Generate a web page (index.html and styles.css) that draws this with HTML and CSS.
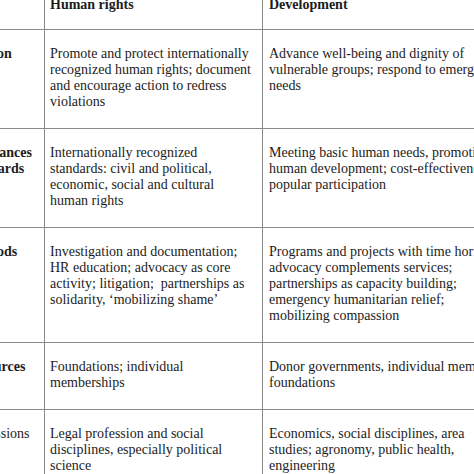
FILE: index.html
```html
<!DOCTYPE html>
<html lang="en">
<head>
<meta charset="utf-8">
<title>Human rights and development NGOs compared</title>
<link rel="stylesheet" href="styles.css">
</head>
<body>
<table class="compare">
  <colgroup>
    <col class="col-aspect">
    <col class="col-hr">
    <col class="col-dev">
  </colgroup>
  <thead>
    <tr>
      <th></th>
      <th>Human rights</th>
      <th>Development</th>
    </tr>
  </thead>
  <tbody>
    <tr>
      <th>Mission</th>
      <td>Promote and protect internationally recognized human rights; document and encourage action to redress violations</td>
      <td>Advance well-being and dignity of vulnerable groups; respond to emergency needs</td>
    </tr>
    <tr>
      <th>Grievances standards</th>
      <td>Internationally recognized standards: civil and political, economic, social and cultural human rights</td>
      <td>Meeting basic human needs, promoting human development; cost-effectiveness; popular participation</td>
    </tr>
    <tr>
      <th>Methods</th>
      <td>Investigation and documentation; HR education; advocacy as core activity; litigation;&nbsp; partnerships as solidarity, ‘mobilizing shame’</td>
      <td>Programs and projects with time horizons; advocacy complements services; partnerships as capacity building; emergency humanitarian relief; mobilizing compassion</td>
    </tr>
    <tr>
      <th>Resources</th>
      <td>Foundations; individual memberships</td>
      <td>Donor governments, individual members, foundations</td>
    </tr>
    <tr>
      <th class="plain">Professions</th>
      <td>Legal profession and social disciplines, especially political science</td>
      <td>Economics, social disciplines, area studies; agronomy, public health, engineering</td>
    </tr>
  </tbody>
</table>
</body>
</html>
```
FILE: styles.css
```css
html, body {
  margin: 0;
  padding: 0;
  background: #ffffff;
  overflow: hidden;
}

.compare {
  border-collapse: collapse;
  table-layout: fixed;
  width: 556px;
  margin: -22px 0 0 -41px;
  font-family: "Liberation Serif", "Times New Roman", serif;
  font-size: 14px;
  line-height: 16px;
  color: #1c1c1c;
}

.col-aspect { width: 85px; }
.col-hr { width: 218px; }
.col-dev { width: 253px; }

.compare th,
.compare td {
  border: 1px solid #8a8a8a;
  padding: 16px 8px 18px 5px;
  text-align: left;
  vertical-align: top;
}

.compare td:last-child,
.compare th:last-child {
  padding-left: 6px;
}

.compare thead th {
  padding-top: 18px;
  padding-bottom: 16px;
}

.compare th {
  font-weight: bold;
}

.compare th.plain {
  font-weight: normal;
}
```
